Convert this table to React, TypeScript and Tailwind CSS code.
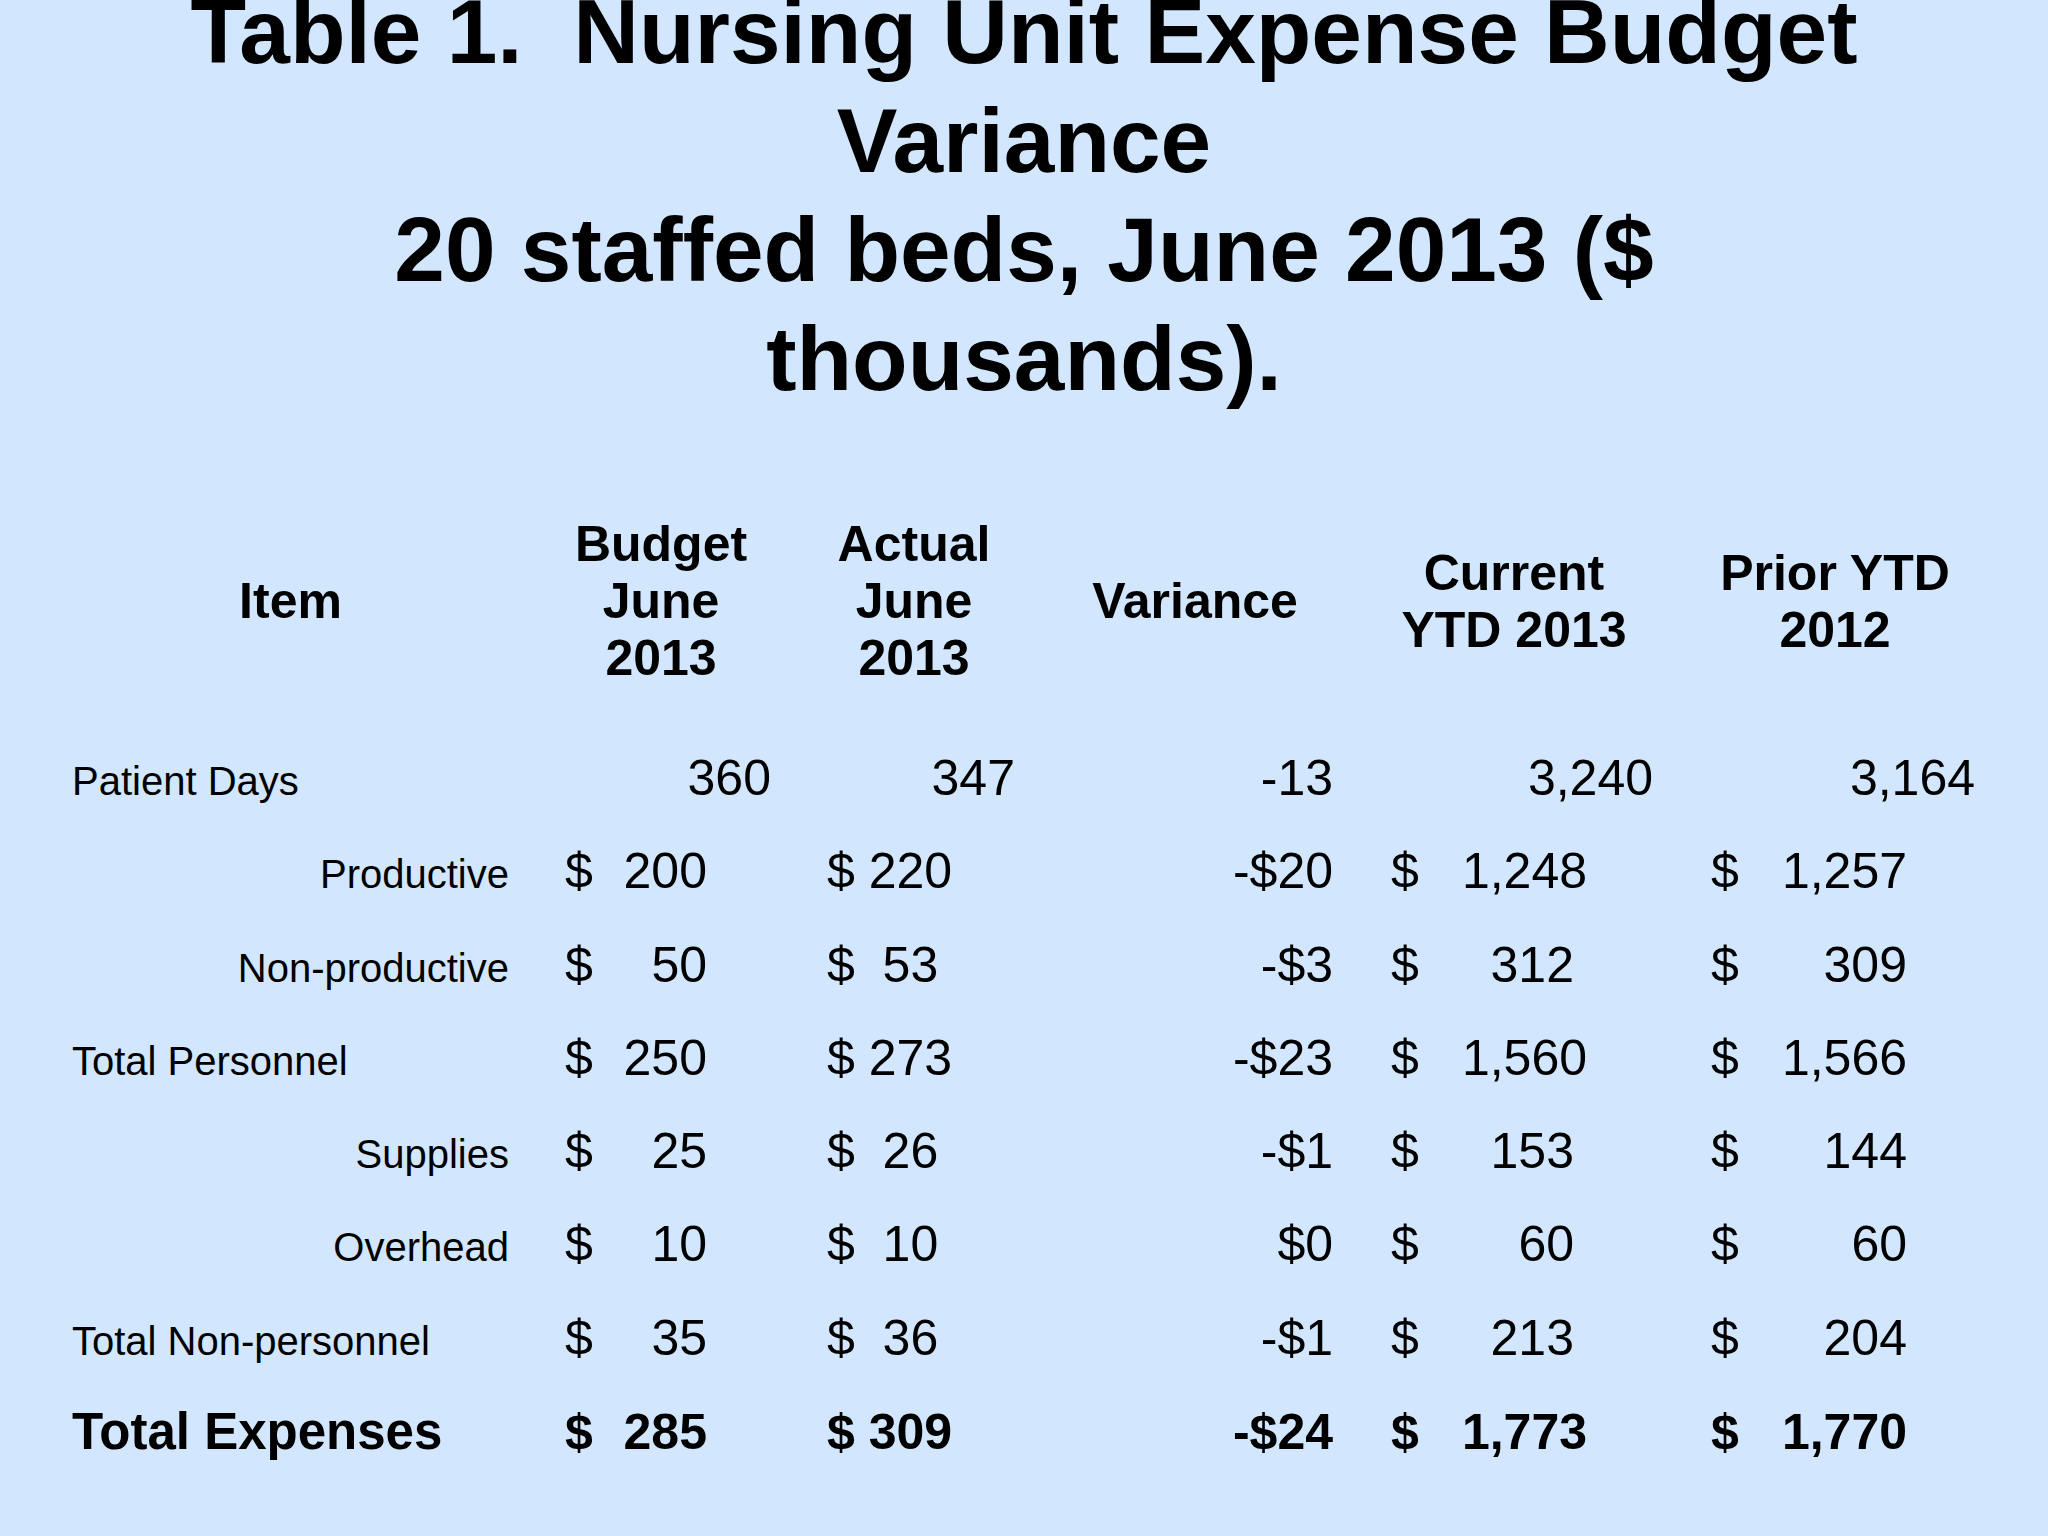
import React from 'react';

// ── data ───────────────────────────────────────────────────────────────────
interface Row {
  label: string;
  indent?: boolean;
  bold?: boolean;
  count?: boolean;
  budget: string;
  actual: string;
  variance: string;
  current: string;
  prior: string;
}

const rows: Row[] = [
  { label: 'Patient Days', count: true, budget: '360', actual: '347', variance: '-13', current: '3,240', prior: '3,164' },
  { label: 'Productive', indent: true, budget: '200', actual: '$ 220', variance: '-$20', current: '1,248', prior: '1,257' },
  { label: 'Non-productive', indent: true, budget: '50', actual: '$  53', variance: '-$3', current: '312', prior: '309' },
  { label: 'Total Personnel', budget: '250', actual: '$ 273', variance: '-$23', current: '1,560', prior: '1,566' },
  { label: 'Supplies', indent: true, budget: '25', actual: '$  26', variance: '-$1', current: '153', prior: '144' },
  { label: 'Overhead', indent: true, budget: '10', actual: '$  10', variance: '$0', current: '60', prior: '60' },
  { label: 'Total Non-personnel', budget: '35', actual: '$  36', variance: '-$1', current: '213', prior: '204' },
  { label: 'Total Expenses', bold: true, budget: '285', actual: '$ 309', variance: '-$24', current: '1,773', prior: '1,770' },
];

const cols = 'grid grid-cols-[437px_262px_244px_318px_320px_322px] pl-[72px]';

// ── header ─────────────────────────────────────────────────────────────────
function HeaderRow() {
  const cell = 'text-center text-[50px] font-bold leading-[57px]';
  return (
    <div className={`${cols} mt-[103px] h-[171px] items-center`}>
      <div className={cell}>Item</div>
      <div className={`${cell} pl-[42px]`}>Budget<br />June<br />2013</div>
      <div className={`${cell} pl-[42px]`}>Actual<br />June<br />2013</div>
      <div className={`${cell} pl-[42px]`}>Variance</div>
      <div className={`${cell} pl-[42px]`}>Current<br />YTD 2013</div>
      <div className={`${cell} pl-[42px]`}>Prior YTD<br />2012</div>
    </div>
  );
}

// ── body row ───────────────────────────────────────────────────────────────
function BodyRow({ row }: { row: Row }) {
  const num = `text-[50px] leading-none ${row.bold ? 'font-bold' : ''}`;
  const label = row.bold
    ? 'text-[51px] font-bold leading-none'
    : 'text-[40px] leading-none';

  return (
    <div className={`${cols} h-[93.3px] items-baseline`}>
      <div className={`${label} ${row.indent ? 'text-right' : 'text-left'}`}>{row.label}</div>

      {row.count ? (
        <>
          <div className={`${num} text-right`}>{row.budget}</div>
          <div className={`${num} text-right`}>{row.actual}</div>
          <div className={`${num} text-right`}>{row.variance}</div>
          <div className={`${num} text-right`}>{row.current}</div>
          <div className={`${num} text-right`}>{row.prior}</div>
        </>
      ) : (
        <>
          <div className={`${num} ml-[56px] flex w-[142px] justify-between`}>
            <span>$</span>
            <span>{row.budget}</span>
          </div>
          <div className={`${num} pl-[56px] whitespace-pre`}>{row.actual}</div>
          <div className={`${num} text-right`}>{row.variance}</div>
          <div className={`${num} ml-[58px] flex w-[196px] justify-between`}>
            <span>$</span>
            <span className={row.current.includes(',') ? '' : 'pr-[13px]'}>{row.current}</span>
          </div>
          <div className={`${num} ml-[58px] flex w-[196px] justify-between`}>
            <span>$</span>
            <span>{row.prior}</span>
          </div>
        </>
      )}
    </div>
  );
}

export default function App() {
  return (
    <div
      className="flex h-[1536px] w-full flex-col overflow-hidden bg-[#d2e6fd] text-black"
      style={{ fontFamily: '"Liberation Sans", Arial, sans-serif' }}
    >
      <h1 className="-mt-[23px] text-center text-[91px] font-bold leading-[109px]">
        Table 1.{'\u00a0'} Nursing Unit Expense Budget
        <br />
        Variance
        <br />
        20 staffed beds, June 2013 ($
        <br />
        thousands).
      </h1>

      <HeaderRow />

      <div className="mt-[66px] flex flex-col">
        {rows.map((row) => (
          <BodyRow key={row.label} row={row} />
        ))}
      </div>
    </div>
  );
}
